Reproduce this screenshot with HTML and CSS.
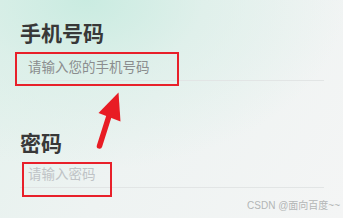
FILE: index.html
```html
<!DOCTYPE html>
<html lang="zh">
<head>
<meta charset="utf-8">
<link rel="stylesheet" href="styles.css">
</head>
<body>
<div class="page">
  <form class="form">
    <div class="field field-phone">
      <div class="label">手机号码</div>
      <div class="input"><span class="value dark">请输入您的手机号码</span></div>
    </div>
    <div class="field field-pass">
      <div class="label">密码</div>
      <div class="input"><span class="value light">请输入密码</span></div>
    </div>
  </form>
  <div class="mark mark-phone"></div>
  <div class="mark mark-pass"></div>
  <svg class="arrow" width="343" height="218" viewBox="0 0 343 218">
    <line x1="109" y1="116" x2="99.5" y2="146" stroke="#e81c24" stroke-width="5.5" stroke-linecap="round"/>
    <polygon points="118.5,92.5 98.5,113 120.5,121.5" fill="#e81c24"/>
  </svg>
  <div class="watermark">CSDN @面向百度~~</div>
</div>
</body>
</html>
```
FILE: styles.css
```css
html, body {
  margin: 0;
  padding: 0;
}
body {
  width: 343px;
  height: 218px;
  overflow: hidden;
  font-family: "Noto Sans CJK SC", "Noto Sans", sans-serif;
}
.page {
  position: relative;
  width: 343px;
  height: 218px;
  background:
    radial-gradient(ellipse 260px 170px at 25% 0%, rgba(200, 235, 224, 0.95) 0%, rgba(214, 238, 230, 0.6) 45%, rgba(238, 243, 242, 0) 100%),
    linear-gradient(120deg, #e3f1ec 0%, #eef3f2 45%, #f4f5f5 100%);
}
.form {
  display: flex;
  flex-direction: column;
  padding: 20px 19px 0 20px;
  margin: 0;
}
.field {
  display: flex;
  flex-direction: column;
}
.label {
  font-size: 21px;
  line-height: 24px;
  font-weight: 700;
  color: #383838;
  height: 24px;
}
.input {
  height: 28px;
  border-bottom: 1.5px solid #e2e5e5;
  padding-left: 8px;
  display: flex;
  align-items: center;
}
.field-phone .input {
  margin-top: 8px;
}
.field-pass {
  margin-top: 49px;
}
.field-pass .input {
  margin-top: 5px;
}
.value {
  font-size: 13.5px;
  line-height: 28px;
}
.value.dark {
  color: #8b8d8e;
}
.value.light {
  color: #bfc3c6;
}
.mark {
  position: absolute;
  border: 2px solid #e8202a;
  box-sizing: border-box;
}
.mark-phone {
  left: 15px;
  top: 52px;
  width: 164px;
  height: 34px;
}
.mark-pass {
  left: 22px;
  top: 162px;
  width: 90px;
  height: 35px;
}
.arrow {
  position: absolute;
  left: 0;
  top: 0;
}
.watermark {
  position: absolute;
  right: 3px;
  top: 199px;
  font-family: "Liberation Sans", "Noto Sans CJK SC", sans-serif;
  font-size: 10px;
  line-height: 14px;
  color: #b3b6b6;
  white-space: nowrap;
}
```
